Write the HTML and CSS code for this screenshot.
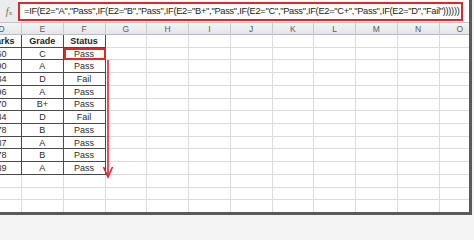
FILE: index.html
```html
<!DOCTYPE html>
<html>
<head>
<meta charset="utf-8">
<link rel="stylesheet" href="styles.css">
</head>
<body>
<div class="app">
  <div class="fbar">
    <div class="fx"><i>f</i><span>x</span></div>
    <div class="formula">=IF(E2="A","Pass",IF(E2="B","Pass",IF(E2="B+","Pass",IF(E2="C","Pass",IF(E2="C+","Pass",IF(E2="D","Fail"))))))</div>
  </div>
  <div class="sheet">
    <div class="grid">
      <div class="ch">D</div><div class="ch">E</div><div class="ch">F</div><div class="ch">G</div><div class="ch">H</div><div class="ch">I</div><div class="ch">J</div><div class="ch">K</div><div class="ch">L</div><div class="ch">M</div><div class="ch">N</div><div class="ch">O</div>

      <div class="c t th">Marks</div><div class="c t th">Grade</div><div class="c t th">Status</div><div class="c"></div><div class="c"></div><div class="c"></div><div class="c"></div><div class="c"></div><div class="c"></div><div class="c"></div><div class="c"></div><div class="c"></div>

      <div class="c t">60</div><div class="c t">C</div><div class="c t sel">Pass</div><div class="c"></div><div class="c"></div><div class="c"></div><div class="c"></div><div class="c"></div><div class="c"></div><div class="c"></div><div class="c"></div><div class="c"></div>
      <div class="c t">90</div><div class="c t">A</div><div class="c t">Pass</div><div class="c"></div><div class="c"></div><div class="c"></div><div class="c"></div><div class="c"></div><div class="c"></div><div class="c"></div><div class="c"></div><div class="c"></div>
      <div class="c t">84</div><div class="c t">D</div><div class="c t">Fail</div><div class="c"></div><div class="c"></div><div class="c"></div><div class="c"></div><div class="c"></div><div class="c"></div><div class="c"></div><div class="c"></div><div class="c"></div>
      <div class="c t">96</div><div class="c t">A</div><div class="c t">Pass</div><div class="c"></div><div class="c"></div><div class="c"></div><div class="c"></div><div class="c"></div><div class="c"></div><div class="c"></div><div class="c"></div><div class="c"></div>
      <div class="c t">70</div><div class="c t">B+</div><div class="c t">Pass</div><div class="c"></div><div class="c"></div><div class="c"></div><div class="c"></div><div class="c"></div><div class="c"></div><div class="c"></div><div class="c"></div><div class="c"></div>
      <div class="c t">84</div><div class="c t">D</div><div class="c t">Fail</div><div class="c"></div><div class="c"></div><div class="c"></div><div class="c"></div><div class="c"></div><div class="c"></div><div class="c"></div><div class="c"></div><div class="c"></div>
      <div class="c t">78</div><div class="c t">B</div><div class="c t">Pass</div><div class="c"></div><div class="c"></div><div class="c"></div><div class="c"></div><div class="c"></div><div class="c"></div><div class="c"></div><div class="c"></div><div class="c"></div>
      <div class="c t">87</div><div class="c t">A</div><div class="c t">Pass</div><div class="c"></div><div class="c"></div><div class="c"></div><div class="c"></div><div class="c"></div><div class="c"></div><div class="c"></div><div class="c"></div><div class="c"></div>
      <div class="c t">78</div><div class="c t">B</div><div class="c t">Pass</div><div class="c"></div><div class="c"></div><div class="c"></div><div class="c"></div><div class="c"></div><div class="c"></div><div class="c"></div><div class="c"></div><div class="c"></div>
      <div class="c t">89</div><div class="c t">A</div><div class="c t">Pass</div><div class="c"></div><div class="c"></div><div class="c"></div><div class="c"></div><div class="c"></div><div class="c"></div><div class="c"></div><div class="c"></div><div class="c"></div>

      <div class="c"></div><div class="c"></div><div class="c"></div><div class="c"></div><div class="c"></div><div class="c"></div><div class="c"></div><div class="c"></div><div class="c"></div><div class="c"></div><div class="c"></div><div class="c"></div>
      <div class="c"></div><div class="c"></div><div class="c"></div><div class="c"></div><div class="c"></div><div class="c"></div><div class="c"></div><div class="c"></div><div class="c"></div><div class="c"></div><div class="c"></div><div class="c"></div>
      <div class="c"></div><div class="c"></div><div class="c"></div><div class="c"></div><div class="c"></div><div class="c"></div><div class="c"></div><div class="c"></div><div class="c"></div><div class="c"></div><div class="c"></div><div class="c"></div>
    </div>
    <svg class="arrow" width="12" height="120" viewBox="0 0 12 120">
      <line x1="6" y1="0" x2="6" y2="116" stroke="#e2262c" stroke-width="1.6"/>
      <polyline points="1.5,107 6,117 10.5,107" fill="none" stroke="#e2262c" stroke-width="1.6"/>
    </svg>
  </div>
</div>
</body>
</html>
```

FILE: styles.css
```css
html, body {
  margin: 0;
  padding: 0;
  background: #f4f4f4;
  overflow: hidden;
}
.app {
  width: 469px;
  height: 212px;
  border-right: 3px solid #5a5a5a;
  border-bottom: 3px solid #5a5a5a;
  background: #ffffff;
  overflow: hidden;
  font-family: "Liberation Sans", Arial, sans-serif;
}
.fbar {
  display: flex;
  height: 22px;
  border-bottom: 1px solid #c6c6c6;
  background: #ffffff;
}
.fx {
  width: 18px;
  flex: none;
  background: #ececec;
  color: #6b6b6b;
  font-family: "Liberation Serif", serif;
  font-size: 9px;
  display: flex;
  align-items: center;
  justify-content: center;
  padding-top: 1px;
}
.fx i { font-size: 10px; }
.fx span { font-size: 7px; margin-top: 3px; }
.formula {
  margin-top: 2px;
  width: 437px;
  height: 15px;
  border: 2px solid #e2262c;
  box-sizing: content-box;
  font-size: 9.3px;
  color: #1a1a1a;
  line-height: 15px;
  padding-left: 4px;
  white-space: nowrap;
  overflow: hidden;
  letter-spacing: -0.3px;
}
.sheet {
  position: relative;
  overflow: hidden;
  height: 189px;
}
.grid {
  display: grid;
  margin-left: -18px;
  grid-template-columns: 40px repeat(11, 41.75px);
  grid-template-rows: 12px repeat(14, 12.73px);
}
.ch {
  background: linear-gradient(#f3f4f6, #e4e6e9);
  border-right: 1px solid #c9cbce;
  border-bottom: 1px solid #b9bbbe;
  color: #5b5b5b;
  font-size: 8.5px;
  display: flex;
  align-items: center;
  justify-content: center;
  box-sizing: border-box;
}
.c {
  border-right: 1px solid #dcdcdc;
  border-bottom: 1px solid #dcdcdc;
  box-sizing: border-box;
  font-size: 9px;
  color: #2b2b2b;
  display: flex;
  align-items: center;
  justify-content: center;
}
.c.t {
  border-right-color: #4a4a4a;
  border-bottom-color: #4a4a4a;
}
.c.th {
  font-weight: bold;
  color: #1e1e1e;
}
.c.sel {
  outline: 2px solid #e2262c;
  outline-offset: -2px;
}
.arrow {
  position: absolute;
  left: 102px;
  top: 37px;
}
```
